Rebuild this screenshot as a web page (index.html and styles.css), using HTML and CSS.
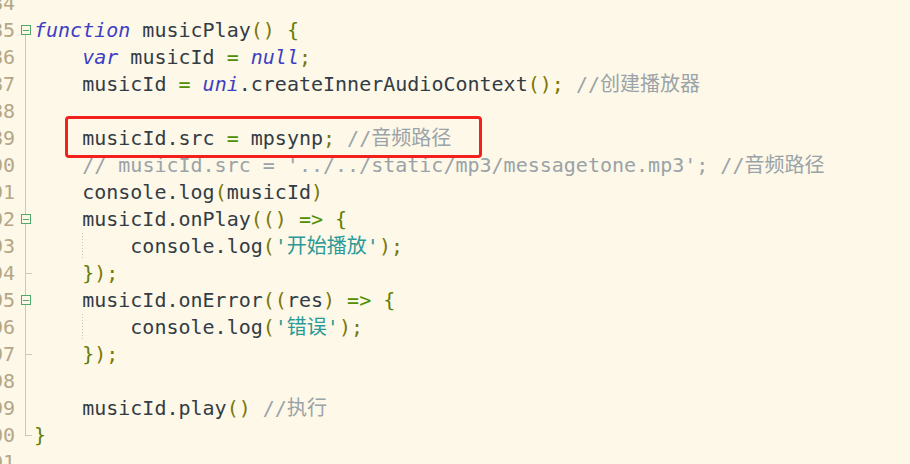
FILE: index.html
```html
<!DOCTYPE html>
<html lang="zh">
<head>
<meta charset="utf-8">
<title>musicPlay</title>
<link rel="stylesheet" href="styles.css">
</head>
<body>
<div class="editor">
  <div class="line"><span class="num">184</span><span class="fold"></span><span class="code"></span></div>
  <div class="line"><span class="num">185</span><span class="fold box first"></span><span class="code"><span class="k">function</span> musicPlay<span class="p">()</span> <span class="b">{</span></span></div>
  <div class="line"><span class="num">186</span><span class="fold vline"></span><span class="code">    <span class="k">var</span> musicId <span class="o">=</span> <span class="k">null</span><span class="p">;</span></span></div>
  <div class="line"><span class="num">187</span><span class="fold vline"></span><span class="code">    musicId <span class="o">=</span> <span class="k">uni</span>.createInnerAudioContext<span class="p">()</span><span class="p">;</span> <span class="c">//创建播放器</span></span></div>
  <div class="line"><span class="num">188</span><span class="fold vline"></span><span class="code"></span></div>
  <div class="line"><span class="num">189</span><span class="fold vline"></span><span class="code">    <span class="hl">musicId.src <span class="o">=</span> mpsynp<span class="p">;</span> <span class="c">//音频路径</span></span></span></div>
  <div class="line"><span class="num">190</span><span class="fold vline"></span><span class="code">    <span class="c">// musicId.src = '../../static/mp3/messagetone.mp3'; //音频路径</span></span></div>
  <div class="line"><span class="num">191</span><span class="fold vline"></span><span class="code">    console.log<span class="p">(</span>musicId<span class="p">)</span></span></div>
  <div class="line"><span class="num">192</span><span class="fold box"></span><span class="code">    musicId.onPlay<span class="p">(()</span> <span class="o">=&gt;</span> <span class="b">{</span></span></div>
  <div class="line"><span class="num">193</span><span class="fold vline"></span><span class="code guide">        console.log<span class="p">(</span><span class="s">'开始播放'</span><span class="p">)</span><span class="p">;</span></span></div>
  <div class="line"><span class="num">194</span><span class="fold tee"></span><span class="code">    <span class="b">}</span><span class="p">);</span></span></div>
  <div class="line"><span class="num">195</span><span class="fold box"></span><span class="code">    musicId.onError<span class="p">((</span>res<span class="p">)</span> <span class="o">=&gt;</span> <span class="b">{</span></span></div>
  <div class="line"><span class="num">196</span><span class="fold vline"></span><span class="code guide">        console.log<span class="p">(</span><span class="s">'错误'</span><span class="p">);</span></span></div>
  <div class="line"><span class="num">197</span><span class="fold tee"></span><span class="code">    <span class="b">}</span><span class="p">);</span></span></div>
  <div class="line"><span class="num">198</span><span class="fold vline"></span><span class="code"></span></div>
  <div class="line"><span class="num">199</span><span class="fold vline"></span><span class="code">    musicId.play<span class="p">()</span> <span class="c">//执行</span></span></div>
  <div class="line"><span class="num">200</span><span class="fold end"></span><span class="code"><span class="b">}</span></span></div>
  <div class="line"><span class="num">201</span><span class="fold"></span><span class="code"></span></div>
</div>
</body>
</html>
```

FILE: styles.css
```css
html, body {
  margin: 0;
  padding: 0;
  background: #fdf8e7;
  overflow: hidden;
  width: 910px;
  height: 464px;
}

.editor {
  margin-top: -10px;
  font-family: "DejaVu Sans Mono", "Noto Sans CJK SC", monospace;
  font-size: 20px;
  color: #333c46;
}

.line {
  display: flex;
  height: 27px;
  line-height: 27px;
}

.num {
  flex: none;
  width: 40px;
  margin-left: -25px;
  text-align: right;
  color: #b5a688;
}

.fold {
  flex: none;
  width: 19px;
  height: 27px;
  position: relative;
}

.code {
  flex: 1;
  white-space: pre;
  height: 27px;
}

.guide {
  background-image: repeating-linear-gradient(to bottom, #c9c5b8 0 1px, transparent 1px 3px);
  background-size: 1px 100%;
  background-position: 48px 0;
  background-repeat: no-repeat;
}

/* gutter tree lines */
.vline::before,
.tee::before,
.end::before,
.box::before {
  content: "";
  position: absolute;
  left: 10px;
  width: 1px;
  background: #cbc8c0;
}

.vline::before,
.tee::before {
  top: 0;
  bottom: 0;
}

.end::before {
  top: 0;
  height: 14px;
}

.tee::after,
.end::after {
  content: "";
  position: absolute;
  left: 10px;
  top: 13px;
  width: 7px;
  height: 1px;
  background: #cbc8c0;
}

.box::before {
  top: 0;
  bottom: 0;
}

.box.first::before {
  top: 14px;
}

.box::after {
  content: "";
  position: absolute;
  left: 6px;
  top: 8px;
  width: 8px;
  height: 8px;
  border: 1px solid #52a86a;
  background: #fdf8e7 linear-gradient(#52a86a, #52a86a) center / 6px 1px no-repeat;
}

/* syntax colours */
.k {
  color: #3d3fc4;
  font-style: italic;
}

.p {
  color: #7a7708;
}

.b {
  color: #5f7d05;
}

.o {
  color: #4f8f00;
}

.s {
  color: #2a9a98;
}

.c {
  color: #9aa3a9;
}

/* highlight box */
.hl {
  display: inline-block;
  position: relative;
  height: 27px;
}

.hl::after {
  content: "";
  position: absolute;
  left: -17px;
  right: -31px;
  top: -9px;
  bottom: -6px;
  border: 3px solid #f2211d;
  border-radius: 4px;
}
```
